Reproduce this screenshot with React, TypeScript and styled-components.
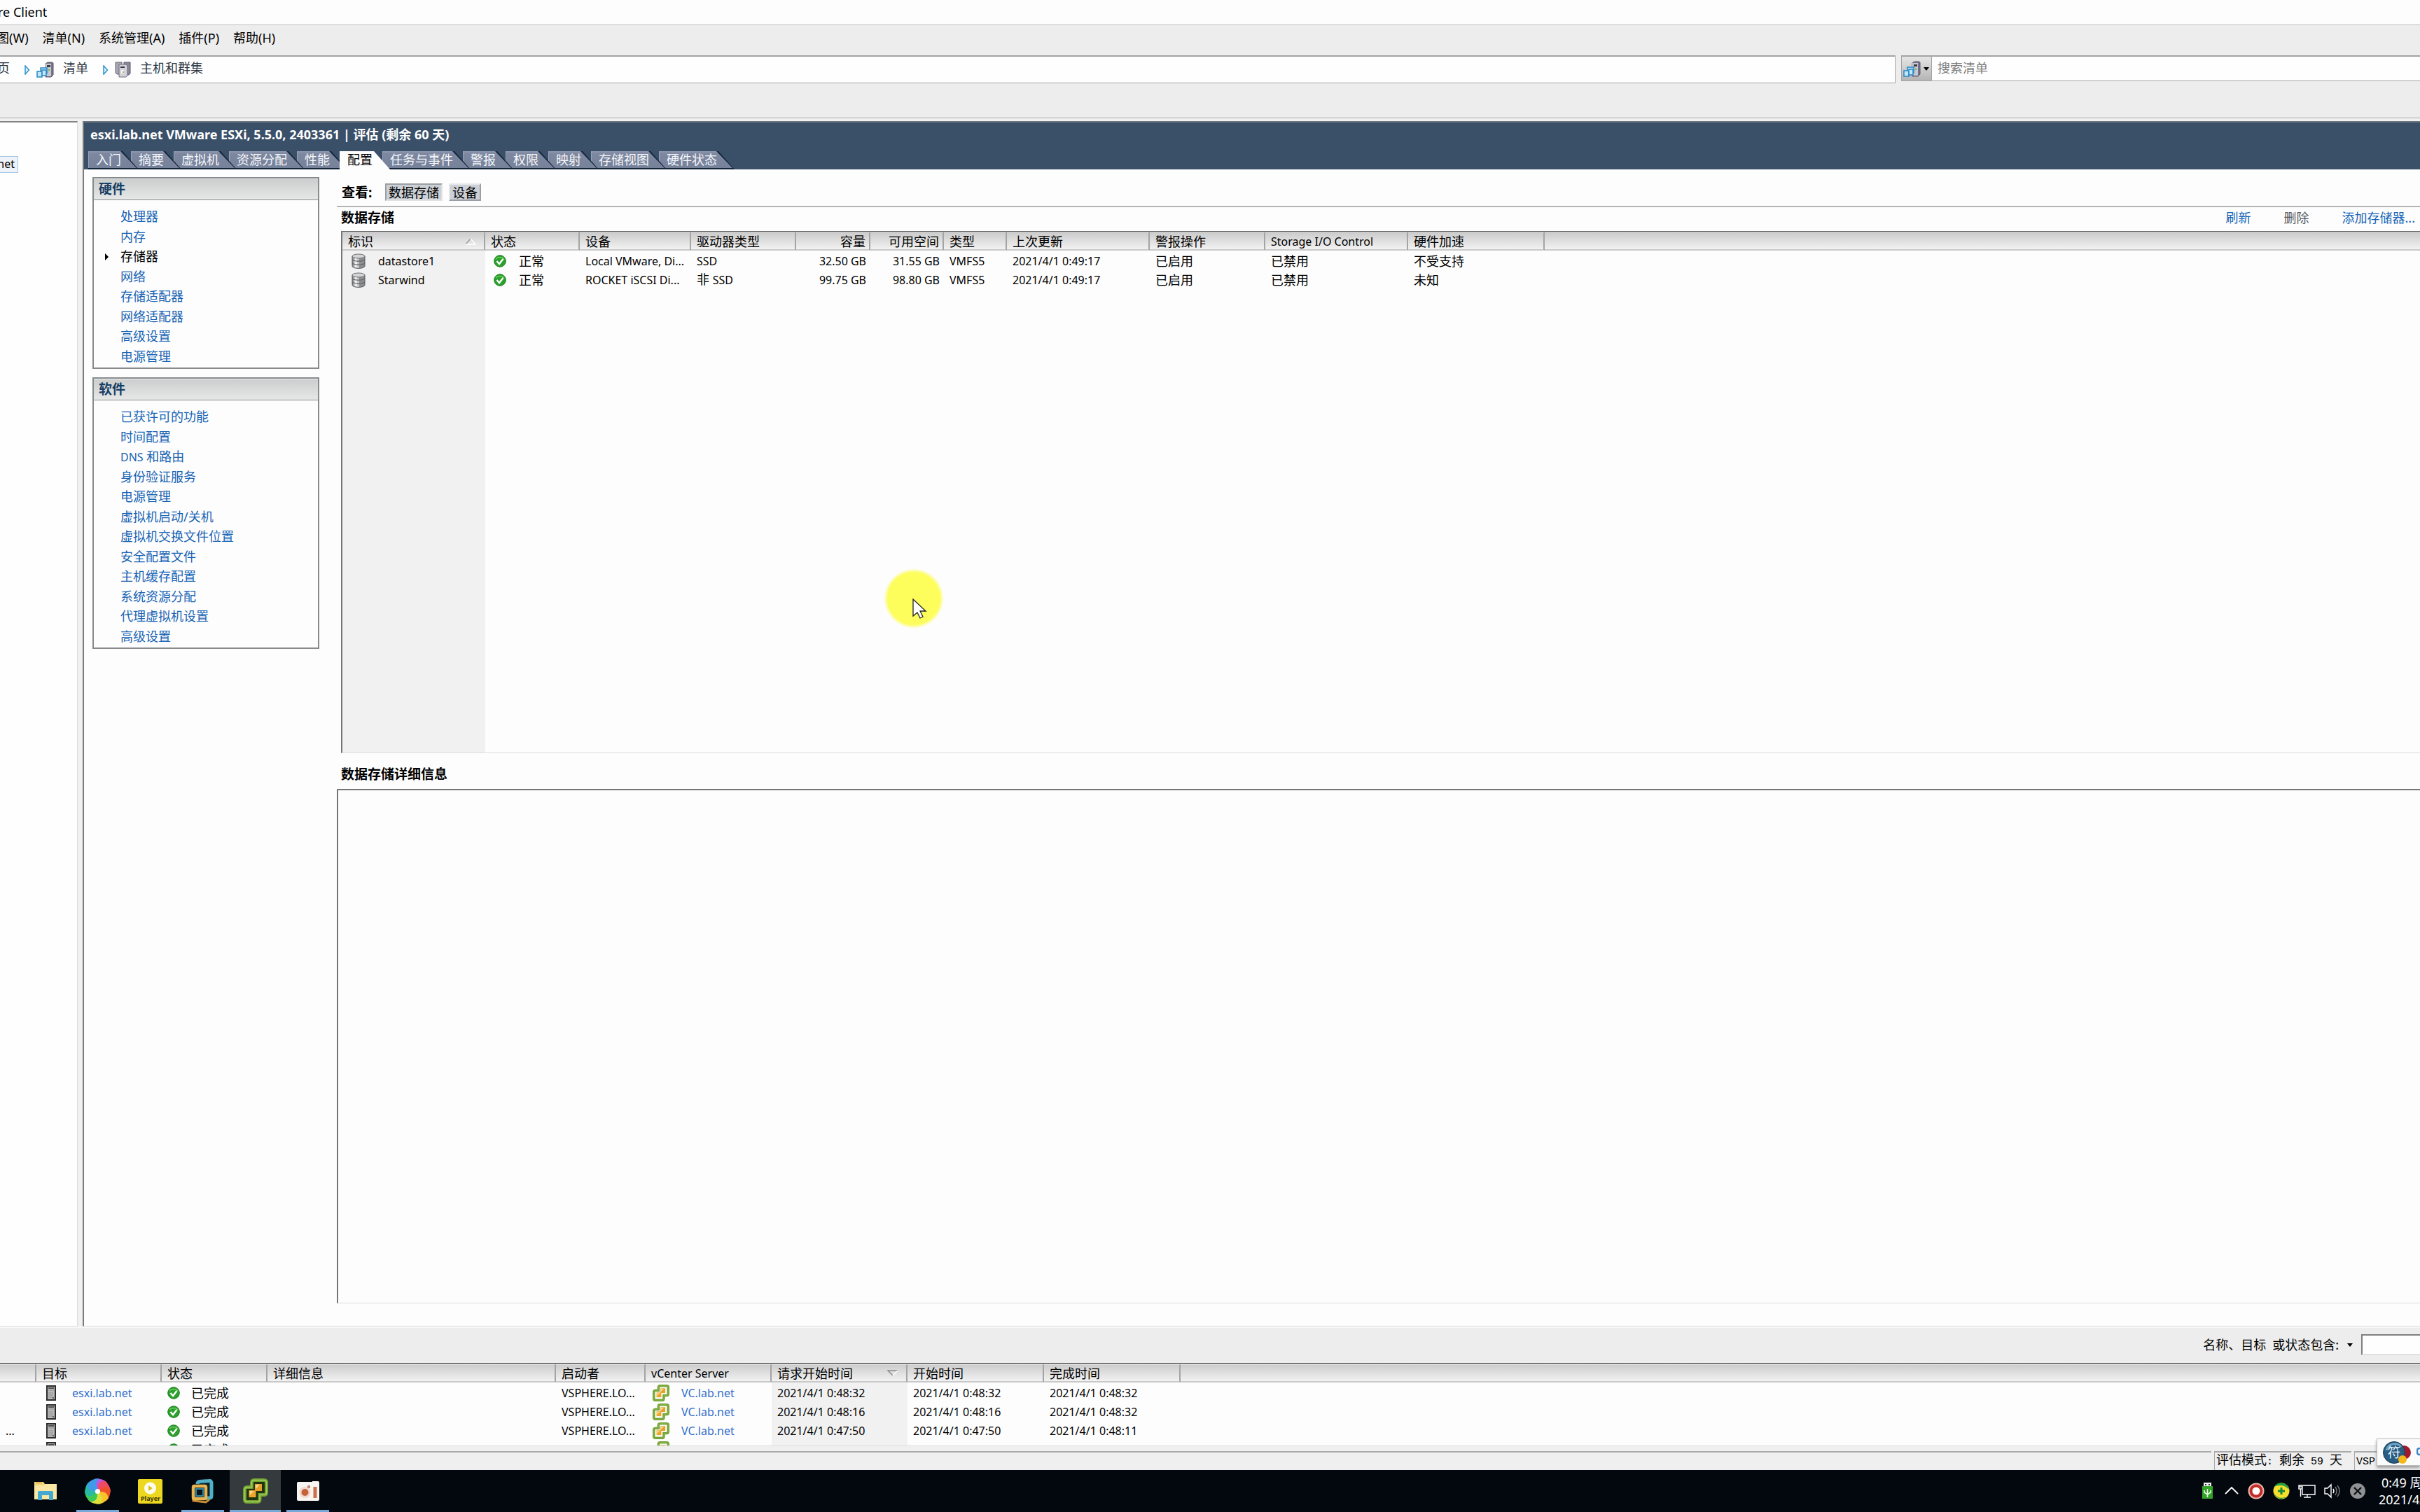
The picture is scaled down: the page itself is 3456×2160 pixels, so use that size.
import React from 'react';
import styled, { createGlobalStyle } from 'styled-components';

const ui = '"Noto Sans", "Noto Sans CJK SC", sans-serif';

const Global = createGlobalStyle`
  * { box-sizing: border-box; }
  html, body, #root { height: 100%; margin: 0; }
  body { overflow: hidden; background: #ededed; }
  button, input { font: inherit; color: inherit; }
  a { text-decoration: none; }
`;

const Desktop = styled.div`
  height: 100vh;
  display: flex;
  flex-direction: column;
  overflow: hidden;
  background: #ededed;
  color: #000;
  font-family: ${ui};
  font-size: 18px;
  line-height: 26px;
  white-space: nowrap;
`;

const Latin = styled.span`font-size: 16px;`;
const Mono = styled.span`
  font-family: "Liberation Mono", monospace;
  font-size: 15px;
  white-space: pre;
`;

const TitleBar = styled.header`
  flex: none;
  height: 36px;
  padding-top: 4px;
  background: #fdfdfd;
  border-bottom: 1px solid #bdbdbd;
`;
const TitleText = styled.div`margin-left: -3px;`;

const MenuBar = styled.nav`
  flex: none;
  display: flex;
  gap: 20px;
  height: 43px;
  padding-top: 5px;
`;
const MenuItem = styled.button`
  height: 26px;
  padding: 0;
  border: 0;
  background: none;
  &:first-child { margin-left: -5px; }
`;

const NavRow = styled.div`
  flex: none;
  display: flex;
  align-items: flex-start;
  gap: 8px;
  height: 90px;
  border-bottom: 1px solid #a9a9a9;
`;
const AddressBar = styled.div`
  flex: 1;
  display: flex;
  align-items: center;
  height: 40px;
  border: 1px solid #a3a3a3;
  border-top-width: 2px;
  border-left: 0;
  background: #fefefe;
  svg { flex: none; }
`;
const CrumbMark = styled.span`
  display: flex;
  margin: 0 9px 0 21px;
`;
const Crumb = styled.a<{ $first?: boolean }>`
  color: #2c3844;
  padding-bottom: 6px;
  margin-left: ${p => (p.$first ? -4 : 13)}px;
`;
const SearchBox = styled.div`
  flex: none;
  display: flex;
  width: 741px;
  height: 37px;
  border: 1px solid #a3a3a3;
  border-top-width: 2px;
  border-right: 0;
  background: #fefefe;
`;
const SearchScope = styled.button`
  display: flex;
  align-items: center;
  gap: 4px;
  width: 43px;
  padding: 0 0 0 2px;
  border: 0;
  border-right: 1px solid #a3a3a3;
  background: linear-gradient(#e6e6e6, #b4b4b4);
`;
const SearchInput = styled.input`
  flex: 1;
  min-width: 0;
  padding: 0 8px 2px;
  border: 0;
  background: none;
  outline: 0;
  &::placeholder { color: #7c7c7c; opacity: 1; }
`;

const Workspace = styled.main`
  flex: 1;
  min-height: 0;
  display: flex;
  gap: 7px;
  padding-top: 4px;
  background: #f1f1f1;
`;
const TreePanel = styled.aside`
  flex: none;
  width: 111px;
  padding-top: 48px;
  background: #fefefe;
  border-top: 2px solid #858585;
  border-bottom: 1px solid #dcdcdc;
  border-right: 1px solid #dcdcdc;
`;
const TreeItem = styled.div`
  width: 26px;
  height: 24px;
  padding-right: 4px;
  border: 1px solid #a9c6e4;
  border-left: 0;
  background: #eef3fa;
  font-size: 16px;
  line-height: 21px;
  display: flex;
  justify-content: flex-end;
`;
const MainPanel = styled.section`
  flex: 1;
  min-width: 0;
  display: flex;
  flex-direction: column;
  border-top: 2px solid #6d7780;
  border-left: 2px solid #7a7a7a;
  border-bottom: 1px solid #dcdcdc;
  background: #fdfdfd;
`;
const HostHeader = styled.div`
  flex: none;
  height: 67px;
  padding: 4px 0 0 6px;
  background: #3a5069;
  color: #fff;
`;
const HostTitle = styled.h1`
  margin: 0 0 11px 3px;
  font-size: 18px;
  line-height: 26px;
  font-weight: 700;
`;
const Tabs = styled.div`
  display: flex;
  isolation: isolate;
`;
const Tab = styled.button<{ $active?: boolean; $z: number }>`
  position: relative;
  z-index: ${p => p.$z};
  height: 26px;
  padding: 0 25px 2px 11px;
  margin: 0 -11px 0 0;
  border: 0;
  background: none;
  color: ${p => (p.$active ? '#000' : '#f4f6fa')};
  line-height: 24px;
  &::before, &::after {
    content: '';
    position: absolute;
    z-index: -1;
    inset: 0;
    background: ${p => (p.$active ? '#fdfdfd' : '#14263a')};
    clip-path: polygon(0 0, calc(100% - 23px) 0, 100% 100%, 0 100%);
  }
  &::after {
    inset: 0 3px ${p => (p.$active ? '0' : '2px')} 0;
    background: ${p => (p.$active ? '#fdfdfd' : 'linear-gradient(#929cb2 0, #7d88a0 3px, #76819a)')};
    border-left: 1px solid ${p => (p.$active ? '#fdfdfd' : '#98a2b8')};
  }
`;

const Body = styled.div`
  flex: 1;
  min-height: 0;
  display: flex;
  gap: 25px;
  padding: 11px 0 32px 12px;
`;
const SideNav = styled.nav`
  flex: none;
  width: 324px;
  display: flex;
  flex-direction: column;
  gap: 12px;
`;
const NavBox = styled.section`border: 2px solid #868a8c;`;
const NavHeading = styled.h2`
  height: 31px;
  margin: 0;
  padding: 1px 7px;
  border-bottom: 1px solid #868a8c;
  border-top: 1px solid #f5f5f5;
  background: linear-gradient(#cccecd, #e6e8e8);
  color: #173f66;
  font-size: 19px;
  line-height: 26px;
`;
const NavList = styled.ul<{ $height: number }>`
  display: grid;
  grid-auto-rows: 1fr;
  box-sizing: content-box;
  height: ${p => p.$height}px;
  margin: 0;
  padding: 10px 0 1px 38px;
  list-style: none;
`;
const NavLink = styled.a<{ $current?: boolean }>`
  position: relative;
  color: ${p => (p.$current ? '#000' : '#1763b4')};
  &::before {
    content: '';
    display: ${p => (p.$current ? 'block' : 'none')};
    position: absolute;
    left: -22px;
    top: 8px;
    border: 5px solid transparent;
    border-left-color: #000;
    border-right: 0;
  }
`;

const Content = styled.div`
  flex: 1;
  min-width: 0;
  display: flex;
  flex-direction: column;
`;
const ViewBar = styled.div`
  flex: none;
  display: flex;
  gap: 9px;
  height: 43px;
  padding: 9px 0 0 7px;
  border-bottom: 2px solid #b4b4b4;
`;
const ViewLabel = styled.strong`
  width: 53px;
  font-size: 19px;
`;
const ViewButton = styled.button<{ $pressed?: boolean }>`
  height: 25px;
  padding: 0 3px;
  border: 2px solid;
  border-color: ${p => (p.$pressed ? '#9a9fa5 #dfe2e5 #dfe2e5 #9a9fa5' : '#e4e7ea #9a9fa5 #9a9fa5 #e4e7ea')};
  background: #cdd1d6;
  line-height: 20px;
`;
const Section = styled.div<{ $tall?: boolean }>`
  flex: none;
  display: flex;
  justify-content: space-between;
  align-items: center;
  height: ${p => (p.$tall ? 51 : 34)}px;
  padding: ${p => (p.$tall ? '9px 7px 0 6px' : '0 7px 4px 6px')};
`;
const SectionTitle = styled.h3`
  margin: 0;
  font-size: 19px;
  line-height: 26px;
`;
const Actions = styled.div`
  display: flex;
  gap: 47px;
`;
const Action = styled.button`
  padding: 0;
  border: 0;
  background: none;
  color: #1763b4;
  &:disabled { color: #5a5a5a; }
`;

const Grid = styled.div<{ $stripe: number; $stripeWidth: number; $grow?: boolean; $inset?: number }>`
  flex: ${p => (p.$grow ? '1 1 0' : 'none')};
  min-height: 0;
  overflow: hidden;
  margin-left: ${p => p.$inset || 0}px;
  border-top: 2px solid #767676;
  border-left: ${p => (p.$inset ? '2px solid #767676' : '0')};
  border-bottom: 1px solid #dcdcdc;
  background: linear-gradient(#f1f1f1, #f1f1f1) ${p => p.$stripe}px 0 / ${p => p.$stripeWidth}px 100% no-repeat #fdfdfd;
`;
const Table = styled.table`
  width: 100%;
  table-layout: fixed;
  border-collapse: separate;
  border-spacing: 0;
`;
const Th = styled.th<{ $right?: boolean }>`
  height: 26px;
  padding: 0 5px 0 8px;
  border-right: 2px solid #a4a4a4;
  border-bottom: 2px solid #c9c9c9;
  border-top: 1px solid #fafafa;
  background: linear-gradient(#cdcdcd, #f2f2f2);
  font-weight: 400;
  line-height: 22px;
  text-align: ${p => (p.$right ? 'right' : 'left')};
  &:last-child { border-right: 0; }
`;
const HeadFlex = styled.div`
  display: flex;
  justify-content: space-between;
  align-items: center;
  padding-right: 6px;
`;
const Td = styled.td<{ $right?: boolean }>`
  height: 27px;
  padding: 0 ${p => (p.$right ? 6 : 0)}px 0 8px;
  line-height: 26px;
  overflow: hidden;
  text-align: ${p => (p.$right ? 'right' : 'left')};
`;
const Spacer = styled.tr`height: 1px;`;
const IconCell = styled.div<{ $gap: number; $pad?: number }>`
  display: flex;
  align-items: center;
  gap: ${p => p.$gap}px;
  padding-left: ${p => p.$pad || 0}px;
  svg { flex: none; }
`;
const HostLink = styled.a`
  color: #2f6fcb;
  font-size: 16px;
`;

const DetailBox = styled.div`
  flex: none;
  height: 735px;
  border: 2px solid #767676;
  border-right: 0;
  border-bottom: 1px solid #dcdcdc;
`;

const FilterBar = styled.div`
  flex: none;
  display: flex;
  justify-content: flex-end;
  align-items: center;
  gap: 12px;
  height: 52px;
  padding-bottom: 2px;
  border-top: 2px solid #f8f8f8;
`;
const FilterInput = styled.input`
  width: 84px;
  height: 30px;
  border: 2px solid #808080;
  border-right: 0;
  border-bottom-color: #e0e0e0;
  background: #fefefe;
`;
const TaskGrid = styled(Grid)`height: 119px;`;

const StatusBar = styled.footer`
  flex: none;
  display: flex;
  gap: 4px;
  height: 34px;
  padding-top: 7px;
  background: #efefef;
`;
const StatusCell = styled.div<{ $width?: number }>`
  flex: ${p => (p.$width ? `0 0 ${p.$width}px` : '1')};
  padding-left: 2px;
  overflow: hidden;
  border-top: 2px solid #a9a9a9;
  border-left: ${p => (p.$width ? 1 : 0)}px solid #a9a9a9;
  line-height: 20px;
`;

const TaskBar = styled.div`
  flex: none;
  display: flex;
  justify-content: space-between;
  height: 60px;
  background: #03080e;
  color: #fff;
`;
const Apps = styled.div`
  display: flex;
  gap: 14px;
  padding-left: 34px;
`;
const AppButton = styled.button<{ $current?: boolean; $open?: boolean }>`
  display: flex;
  align-items: center;
  justify-content: center;
  width: ${p => (p.$current ? 73 : 61)}px;
  margin: 0 ${p => (p.$current ? -6 : 0)}px;
  padding: 3px 0 0;
  border: 0;
  border-bottom: 3px solid ${p => (p.$open ? '#76a9d8' : 'transparent')};
  background: ${p => (p.$current ? '#353a3f' : 'none')};
  svg { flex: none; }
`;
const Tray = styled.div`
  display: flex;
  align-items: center;
  gap: 12px;
  width: 316px;
  svg { flex: none; }
`;
const Clock = styled.div`
  flex: none;
  margin-left: 6px;
  line-height: 24px;
  div:first-child { padding-left: 4px; }
`;

const ImeBar = styled.div`
  position: absolute;
  right: 0;
  bottom: 66px;
  width: 62px;
  height: 39px;
  display: flex;
  align-items: center;
  gap: 8px;
  padding-left: 8px;
  overflow: hidden;
  border: 1px solid #bcbcbc;
  border-right: 0;
  background: #fbfbfb;
  box-shadow: 0 3px 4px rgba(0, 0, 0, 0.35);
  svg { flex: none; }
`;
const Pointer = styled.div`
  position: absolute;
  left: 1262px;
  top: 812px;
  width: 86px;
  height: 86px;
  pointer-events: none;
  background: radial-gradient(circle, #fdfd5c 0, #fdfd5c 37px, rgba(253, 253, 92, 0) 43px);
`;

const Chevron = () => (
  <CrumbMark><svg width="8" height="14" viewBox="0 0 8 14"><path d="M1 1l5.5 6L1 13z" fill="#dff2ff" stroke="#2e93cf" strokeWidth="1.5" /></svg></CrumbMark>
);
const InventoryIcon = () => (
  <svg width="25" height="23" viewBox="0 0 25 23">
    <path d="M13 3l3-2h6l2 1v17l-3 3h-8z" fill="#77738a" stroke="#5a5668" />
    <path d="M13 3h8v18h-8z" fill="#c9c7d2" />
    <path d="M15 5h5v3h-5z" fill="#3d3a48" /><path d="M17 11h2v2h-2z" fill="#58c13a" />
    <g fill="#bfe6fb" stroke="#2b86c4" strokeWidth="1.5"><path d="M6 9h9v8H6z" /><path d="M1 14h7v8H1z" /><path d="M8 12h6v8H8z" /></g>
  </svg>
);
const HostsIcon = () => (
  <svg width="23" height="23" viewBox="0 0 23 23">
    <path d="M1 1h9v17H3l-2-2z" fill="#aaa7b3" stroke="#666270" /><path d="M13 1h9v16l-2 2h-7z" fill="#8b8797" stroke="#5a5668" />
    <path d="M6 4h10l2 2v14l-2 2H6z" fill="#d3d1da" stroke="#6d6a78" /><path d="M8 7h6v2H8z" fill="#383543" /><path d="M9 12h4v5H9z" fill="#f4f4f6" /><path d="M11 14h2v2h-2z" fill="#9bbb4a" />
  </svg>
);
const Caret = () => <svg width="8" height="5" viewBox="0 0 8 5"><path d="M0 0h8L4 5z" fill="#000" /></svg>;
const DiskIcon = () => (
  <svg width="20" height="22" viewBox="0 0 20 22">
    <path d="M1 4v14c0 4.500 18 4.500 18 0V4z" fill="#8d8f91" stroke="#5a5c5e" />
    <path d="M3 6v13.500c2 1 6 1.400 8 1.400V6z" fill="#c4c6c8" /><path d="M5 6v14h3V6z" fill="#f0f0f1" />
    <ellipse cx="10" cy="4" rx="9" ry="3" fill="#d3d5d6" stroke="#6b6d6f" />
    <path d="M1 8.500c2 3.500 16 3.500 18 0M1 13.500c2 3.500 16 3.500 18 0" fill="none" stroke="#606264" strokeWidth="1.200" />
  </svg>
);
const OkIcon = () => (
  <svg width="18" height="18" viewBox="0 0 18 18">
    <circle cx="9" cy="9" r="8.300" fill="#2aa12a" stroke="#1b7a1d" /><path d="M3 6a7 5 0 0 1 12 0" fill="none" stroke="#70cc60" strokeWidth="1.500" />
    <path d="M4.500 9l3.500 4 5.500-7" fill="none" stroke="#fff" strokeWidth="2.400" />
  </svg>
);
const ServerIcon = () => (
  <svg width="14" height="22" viewBox="0 0 14 22">
    <path d="M1 1h12v20H1z" fill="#b9b9b9" stroke="#2b2b2b" strokeWidth="2" /><path d="M3 4h8" stroke="#222" strokeWidth="1.400" /><path d="M3 7h8M3 11h7M3 14h7M3 17h7" stroke="#8b8b8b" /><path d="M9 18h2" stroke="#444" strokeWidth="1.400" />
  </svg>
);
const outline = 'M16 2.500h14q3.500 0 3.500 3.500v14q0 3.500-3.500 3.500h-6v6.500q0 3.500-3.500 3.500H6q-3.500 0-3.500-3.500V16q0-3.500 3.500-3.500h6.500V6q0-3.500 3.500-3.500z';
const VsphereIcon = ({ size = 24, dark = false }) => (
  <svg width={size} height={size} viewBox="0 0 36 36">
    <path d={outline} fill={dark ? '#22330f' : '#f4f7e6'} stroke="#6fa02f" strokeWidth="5" />
    <path d={outline} fill="none" stroke={dark ? '#a5cf62' : '#86b34a'} strokeWidth="1.500" />
    <path d="M17 8h10v10H17z" fill="#e5a02a" /><path d="M8.500 17h10v10h-10z" fill="#eda52b" />
    <path d="M18 9h6l-6 6zM9.500 18h6l-6 6z" fill="#fbd892" />
  </svg>
);
const SortUp = () => <svg width="16" height="10" viewBox="0 0 16 10"><path d="M1 9l7-8" stroke="#9a9a9a" strokeWidth="1.400" /><path d="M8 1l7 8H1" fill="none" stroke="#fff" strokeWidth="1.400" /></svg>;
const SortDown = () => <svg width="16" height="9" viewBox="0 0 16 9"><path d="M15 1H1l7 7" fill="none" stroke="#8c8c8c" strokeWidth="1.400" /><path d="M8 8l7-7" stroke="#fff" strokeWidth="1.400" /></svg>;

const FolderIcon = () => (
  <svg width="32" height="28" viewBox="0 0 32 28">
    <path d="M0 1h13l2 3h17v22H0z" fill="#f3d77c" /><path d="M2 2h9v1H2z" fill="#b98a2b" /><path d="M0 6h14l2-2h16v22H0z" fill="#fae7a4" />
    <path d="M5 27V16q0-2 2-2h18q2 0 2 2v11h-6v-7H11v7z" fill="#43a9d3" />
  </svg>
);
const petals = ['#b957e6', '#f04a63', '#f0512c', '#f9c22b', '#dfe03a', '#3cc957', '#27b9a4', '#3f9be8'];
const SwirlIcon = () => (
  <svg width="37" height="37" viewBox="-18.500 -18.500 37 37">
    {petals.map((c, i) => (
      <path key={c} d="M0 -2C-7 -5 -9 -13 -3 -18C5 -18.500 11 -16 14 -11.500C8 -12 3 -8 2 -1z" fill={c} transform={`rotate(${i * 45})`} />
    ))}
    <circle r="3.600" fill="#fff" />
  </svg>
);
const PlayerText = styled.text`
  font: 700 9px ${ui};
`;
const PlayerIcon = () => (
  <svg width="35" height="35" viewBox="0 0 35 35">
    <rect width="35" height="35" rx="2" fill="#ecd820" /><circle cx="17.500" cy="13" r="8.500" fill="#fffdf0" /><path d="M15 9l6 4-6 4z" fill="#d9c21c" />
    <PlayerText x="18" y="31" textAnchor="middle" fill="#3f3600">Player</PlayerText>
  </svg>
);
const VmwareIcon = () => (
  <svg width="33" height="35" viewBox="0 0 33 35">
    <path d="M9 7q0-3 3-3.500L25 2.500q4-.5 4 3V24q0 3-3 3h-4" fill="#10222b" stroke="#4fb0c8" strokeWidth="5" />
    <path d="M3 27v4l18 2 5-4" fill="none" stroke="#c98d34" strokeWidth="3" />
    <rect x="3" y="10" width="18" height="18" rx="1.500" fill="#0b141b" stroke="#e6b552" strokeWidth="4.500" />
    <path d="M7 14h10v10H7z" fill="none" stroke="#2d86a0" strokeWidth="2" />
  </svg>
);
const RecorderIcon = () => (
  <svg width="32" height="29" viewBox="0 0 32 29">
    <path d="M0 3q0-2 2-2h20V0h8q2 0 2 2v24q0 2-2 2H2q-2 0-2-2z" fill="#f7f4f2" /><circle cx="11.500" cy="16" r="6.500" fill="#c6613a" stroke="#f0d9cd" strokeWidth="3" /><circle cx="17" cy="8" r="2.200" fill="#b88a78" /><path d="M23.500 8h5v16h-5z" fill="#cc7048" />
  </svg>
);

const menus = ['图(W)', '清单(N)', '系统管理(A)', '插件(P)', '帮助(H)'];
const tabs = ['入门', '摘要', '虚拟机', '资源分配', '性能', '配置', '任务与事件', '警报', '权限', '映射', '存储视图', '硬件状态'];
const hardware = ['处理器', '内存', '存储器', '网络', '存储适配器', '网络适配器', '高级设置', '电源管理'];
const software = ['已获许可的功能', '时间配置', 'DNS 和路由', '身份验证服务', '电源管理', '虚拟机启动/关机', '虚拟机交换文件位置', '安全配置文件', '主机缓存配置', '系统资源分配', '代理虚拟机设置', '高级设置'];
const storeCols = [204, 135, 159, 150, 106, 105, 90, 204, 165, 204, 195];
const stores = [
  { name: 'datastore1', device: 'Local VMware, Di...', ssd: true, cap: '32.50 GB', free: '31.55 GB', accel: '不受支持' },
  { name: 'Starwind', device: 'ROCKET iSCSI Di...', ssd: false, cap: '99.75 GB', free: '98.80 GB', accel: '未知' },
];
const taskCols = [52, 179, 151, 412, 128, 180, 194, 195, 195];
const tasks = [
  ['', '2021/4/1 0:48:32', '2021/4/1 0:48:32', '2021/4/1 0:48:32'],
  ['', '2021/4/1 0:48:16', '2021/4/1 0:48:16', '2021/4/1 0:48:32'],
  ['...', '2021/4/1 0:47:50', '2021/4/1 0:47:50', '2021/4/1 0:48:11'],
  ['', '2021/4/1 0:47:50', '2021/4/1 0:47:50', '2021/4/1 0:48:11'],
];

const Cols = ({ widths }: { widths: number[] }) => (
  <colgroup>{widths.map((w, i) => <col key={i} style={{ width: w }} />)}<col /></colgroup>
);

const NavGroup = ({ title, items, current }: { title: string; items: string[]; current?: string }) => (
  <NavBox>
    <NavHeading>{title}</NavHeading>
    <NavList $height={items.length * 57 / 2}>
      {items.map(t => (
        <li key={t}><NavLink href="#" $current={t === current}>
          {t.startsWith('DNS') ? <><Latin>DNS</Latin> 和路由</> : t}
        </NavLink></li>
      ))}
    </NavList>
  </NavBox>
);

const StoreTable = () => (
  <Table>
    <Cols widths={storeCols} />
    <thead>
      <tr>
        <Th><HeadFlex>标识<SortUp /></HeadFlex></Th><Th>状态</Th><Th>设备</Th><Th>驱动器类型</Th><Th $right>容量</Th><Th $right>可用空间</Th>
        <Th>类型</Th><Th>上次更新</Th><Th>警报操作</Th><Th><Latin>Storage I/O Control</Latin></Th><Th>硬件加速</Th><Th />
      </tr>
    </thead>
    <tbody>
      <Spacer />
      {stores.map(s => (
        <tr key={s.name}>
          <Td><IconCell $gap={18} $pad={5}><DiskIcon /><Latin>{s.name}</Latin></IconCell></Td>
          <Td><IconCell $gap={18} $pad={4}><OkIcon />正常</IconCell></Td>
          <Td><Latin>{s.device}</Latin></Td>
          <Td>{!s.ssd && '非 '}<Latin>SSD</Latin></Td>
          <Td $right><Latin>{s.cap}</Latin></Td>
          <Td $right><Latin>{s.free}</Latin></Td>
          <Td><Latin>VMFS5</Latin></Td>
          <Td><Latin>2021/4/1 0:49:17</Latin></Td>
          <Td>已启用</Td><Td>已禁用</Td><Td>{s.accel}</Td><Td />
        </tr>
      ))}
    </tbody>
  </Table>
);

const TaskTable = () => (
  <Table>
    <Cols widths={taskCols} />
    <thead>
      <tr>
        <Th /><Th>目标</Th><Th>状态</Th><Th>详细信息</Th><Th>启动者</Th><Th><Latin>vCenter Server</Latin></Th>
        <Th><HeadFlex>请求开始时间<SortDown /></HeadFlex></Th><Th>开始时间</Th><Th>完成时间</Th><Th />
      </tr>
    </thead>
    <tbody>
      <Spacer />
      {tasks.map((t, i) => (
        <tr key={i}>
          <Td><Latin>{t[0]}</Latin></Td>
          <Td><IconCell $gap={23} $pad={6}><ServerIcon /><HostLink href="#">esxi.lab.net</HostLink></IconCell></Td>
          <Td><IconCell $gap={16}><OkIcon />已完成</IconCell></Td>
          <Td />
          <Td><Latin>VSPHERE.LO...</Latin></Td>
          <Td><IconCell $gap={17} $pad={2}><VsphereIcon /><HostLink href="#">VC.lab.net</HostLink></IconCell></Td>
          <Td><Latin>{t[1]}</Latin></Td><Td><Latin>{t[2]}</Latin></Td><Td><Latin>{t[3]}</Latin></Td><Td />
        </tr>
      ))}
    </tbody>
  </Table>
);

export default function App() {
  return (
    <Desktop>
      <Global />
      <TitleBar><TitleText>re Client</TitleText></TitleBar>
      <MenuBar>{menus.map(m => <MenuItem key={m}>{m}</MenuItem>)}</MenuBar>
      <NavRow>
        <AddressBar>
          <Crumb href="#" $first>页</Crumb><Chevron /><InventoryIcon />
          <Crumb href="#">清单</Crumb><Chevron /><HostsIcon />
          <Crumb href="#">主机和群集</Crumb>
        </AddressBar>
        <SearchBox>
          <SearchScope aria-label="搜索范围"><InventoryIcon /><Caret /></SearchScope>
          <SearchInput aria-label="搜索清单" placeholder="搜索清单" />
        </SearchBox>
      </NavRow>
      <Workspace>
        <TreePanel><TreeItem>net</TreeItem></TreePanel>
        <MainPanel>
          <HostHeader>
            <HostTitle>esxi.lab.net VMware ESXi, 5.5.0, 2403361 | 评估 (剩余 60 天)</HostTitle>
            <Tabs>
              {tabs.map((t, i) => <Tab key={t} $active={t === '配置'} $z={t === '配置' ? 20 : 12 - i}>{t}</Tab>)}
            </Tabs>
          </HostHeader>
          <Body>
            <SideNav>
              <NavGroup title="硬件" items={hardware} current="存储器" />
              <NavGroup title="软件" items={software} />
            </SideNav>
            <Content>
              <ViewBar>
                <ViewLabel>查看:</ViewLabel><ViewButton $pressed>数据存储</ViewButton><ViewButton>设备</ViewButton>
              </ViewBar>
              <Section>
                <SectionTitle>数据存储</SectionTitle>
                <Actions><Action>刷新</Action><Action disabled>删除</Action><Action>添加存储器...</Action></Actions>
              </Section>
              <Grid $grow $inset={6} $stripe={0} $stripeWidth={204}><StoreTable /></Grid>
              <Section $tall><SectionTitle>数据存储详细信息</SectionTitle></Section>
              <DetailBox />
            </Content>
          </Body>
        </MainPanel>
      </Workspace>
      <FilterBar>
        <label htmlFor="filter">名称、目标&ensp;或状态包含:</label><Caret />
        <FilterInput id="filter" />
      </FilterBar>
      <TaskGrid $stripe={1102} $stripeWidth={194}><TaskTable /></TaskGrid>
      <StatusBar>
        <StatusCell />
        <StatusCell $width={196}>评估模式<Mono>: </Mono>剩余<Mono> 59 </Mono>天</StatusCell>
        <StatusCell $width={94}><Mono>VSP</Mono></StatusCell>
      </StatusBar>
      <TaskBar>
        <Apps>
          <AppButton aria-label="文件"><FolderIcon /></AppButton>
          <AppButton aria-label="浏览器" $open><SwirlIcon /></AppButton>
          <AppButton aria-label="播放器"><PlayerIcon /></AppButton>
          <AppButton aria-label="虚拟机" $open><VmwareIcon /></AppButton>
          <AppButton aria-label="客户端" $open $current><VsphereIcon size={36} dark /></AppButton>
          <AppButton aria-label="录制" $open><RecorderIcon /></AppButton>
        </Apps>
        <Tray>
          <svg width="24" height="24" viewBox="0 0 24 24"><path d="M7 0h11v6H7z" fill="#eee" /><path d="M9 2h2v2H9zM14 2h2v2h-2z" fill="#333" /><path d="M5 5h15v18H5z" fill="#35a329" /><path d="M12.500 9v12M8 11v3l4.500 3 4.500-3v-3" fill="none" stroke="#e7ffe0" strokeWidth="1.600" /></svg>
          <svg width="22" height="24" viewBox="0 0 22 24"><path d="M2 16l9-9 9 9" fill="none" stroke="#fff" strokeWidth="1.800" /></svg>
          <svg width="24" height="24" viewBox="0 0 24 24"><circle cx="12" cy="12" r="11.500" fill="#e8b3ab" /><circle cx="12" cy="12" r="7.500" fill="#fff" stroke="#c02b26" strokeWidth="4" /></svg>
          <svg width="24" height="24" viewBox="0 0 24 24"><circle cx="12" cy="12" r="11.500" fill="#f4df2c" /><path d="M2 6A11.500 11.500 0 0 1 23 10C16 3 9 3 2 6zM1 14c4 9 12 9 19 6A11.500 11.500 0 0 1 1 14z" fill="#25a043" /><path d="M12 7v10M7 12h10" stroke="#16883a" strokeWidth="3" /></svg>
          <svg width="25" height="22" viewBox="0 0 25 22"><path d="M7 3h17v13H6V9M8 20h10M13 16v4M1 3h5v5H1zM3.500 8v11M1 5h5" fill="none" stroke="#fff" strokeWidth="1.400" /></svg>
          <svg width="24" height="22" viewBox="0 0 24 22"><path d="M1 7h4l5-5v18l-5-5H1z" fill="none" stroke="#fff" strokeWidth="1.400" /><path d="M13 8q2 3 0 6" fill="none" stroke="#fff" strokeWidth="1.400" /><path d="M16 5q4 6 0 12M19 3q6 8 0 16" fill="none" stroke="#777" strokeWidth="1.400" /></svg>
          <svg width="24" height="24" viewBox="0 0 24 24"><circle cx="12" cy="12" r="11" fill="#8f9193" /><path d="M7 7l10 10M17 7L7 17" stroke="#0c1015" strokeWidth="2.400" /></svg>
          <Clock><div>0:49 周四</div><div>2021/4/1</div></Clock>
        </Tray>
      </TaskBar>
      <ImeBar>
        <svg width="40" height="34" viewBox="0 0 40 34"><circle cx="30" cy="17" r="10" fill="#a3192c" /><circle cx="16" cy="17" r="15.500" fill="#285c80" stroke="#163c58" /><path d="M5 14A12 12 0 0 1 26 9" fill="none" stroke="#6ba2c4" strokeWidth="3" /><text x="16" y="24" textAnchor="middle" fontSize="19" fill="#e5f4ff">符</text><circle cx="28" cy="27" r="6" fill="#f4b81c" /></svg>
        <svg width="14" height="14" viewBox="0 0 14 14"><rect x="1" y="1" width="18" height="9" rx="3" fill="none" stroke="#3b86c6" strokeWidth="2.500" /></svg>
      </ImeBar>
      <Pointer>
        <svg width="86" height="86" viewBox="0 0 86 86"><path d="M42 44v24l6-5 4 8 4-2-4-8h8z" fill="#fff" stroke="#222" strokeWidth="1.300" /></svg>
      </Pointer>
    </Desktop>
  );
}
